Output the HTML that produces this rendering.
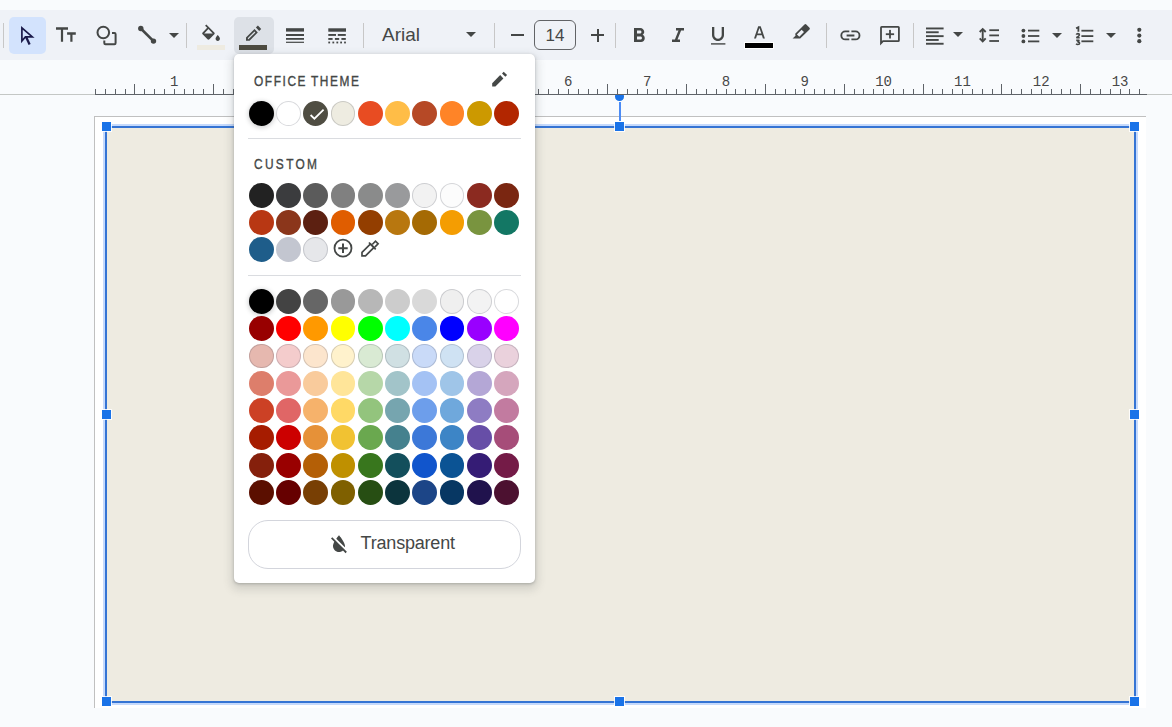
<!DOCTYPE html>
<html><head><meta charset="utf-8">
<style>
*{margin:0;padding:0;box-sizing:border-box}
html,body{width:1172px;height:727px;overflow:hidden;background:#f9fbfd;font-family:"Liberation Sans",sans-serif;position:relative}
.abs{position:absolute}
.tb{position:absolute;left:0;top:10px;width:1172px;height:50px;background:#eff2f7}
.sep{position:absolute;top:23px;width:1px;height:25px;background:#c7c7c7}
.tri{position:absolute;width:0;height:0;border-left:5px solid transparent;border-right:5px solid transparent;border-top:5px solid #444746}
svg{position:absolute;overflow:visible}
.sw{position:absolute;width:24.8px;height:24.8px;border-radius:50%}
.bd{box-shadow:inset 0 0 0 1px rgba(60,64,80,.2)}
.lbl{position:absolute;font-size:14px;color:#444746;letter-spacing:1.85px;transform:scaleX(0.85);transform-origin:0 0;-webkit-text-stroke:0.35px #444746;white-space:nowrap}
.rn{position:absolute;top:73px;font-size:14px;line-height:16px;font-family:"Liberation Mono",monospace;color:#474747;width:30px;text-align:center}
.tick{position:absolute;width:1px;background:#5f6368}
.h{position:absolute;width:9px;height:9px;background:#1a73e8;box-shadow:0 0 0 1px rgba(255,255,255,.85)}
</style></head><body>

<div class="tb"></div>
<div class="sep" style="left:3px"></div>
<div class="sep" style="left:186px"></div>
<div class="sep" style="left:363px"></div>
<div class="sep" style="left:494px"></div>
<div class="sep" style="left:615px"></div>
<div class="sep" style="left:826px"></div>
<div class="sep" style="left:913px"></div>
<div class="abs" style="left:9px;top:17px;width:37px;height:37px;border-radius:5px;background:#d3e3fd"></div>
<svg style="left:14px;top:20px" width="30" height="30" viewBox="0 0 30 30"><path d="M7.9 7.9 V21 L11.4 16.9 H18.3 Z" fill="none" stroke="#1b1a4a" stroke-width="1.7" stroke-linejoin="miter" stroke-miterlimit="10"/><path d="M12 16.8 L15.6 24.4" stroke="#1b1a4a" stroke-width="2.3"/></svg>
<svg style="left:50px;top:20px" width="30" height="30" viewBox="0 0 30 30"><path d="M6 7.2 H18 V9.7 H13.1 V21.8 H10.9 V9.7 H6 Z M17.1 12.2 H25.8 V14.7 H22.5 V21.8 H20.3 V14.7 H17.1 Z" fill="#444746"/></svg>
<svg style="left:94px;top:24px" width="26" height="24" viewBox="0 0 26 24"><circle cx="9.3" cy="8.5" r="5.8" fill="none" stroke="#444746" stroke-width="2"/><path d="M18 9.1 H20.4 Q21.6 9.1 21.6 10.3 V19.1 Q21.6 20.3 20.4 20.3 H11.5 Q10.3 20.3 10.3 19.1 V16.6" fill="none" stroke="#444746" stroke-width="2"/></svg>
<svg style="left:136px;top:24px" width="22" height="22" viewBox="0 0 22 22"><path d="M4.8 4.5 L17.5 17.1" stroke="#444746" stroke-width="2.6"/><circle cx="4.8" cy="4.5" r="2.7" fill="#444746"/><circle cx="17.5" cy="17.1" r="2.7" fill="#444746"/></svg>
<div class="tri" style="left:169px;top:32.7px"></div>
<svg style="left:199px;top:24px" width="24" height="24" viewBox="0 0 24 24"><path transform="translate(0.52 0.47) scale(0.893)" d="M16.56 8.94L7.62 0 6.21 1.41l2.38 2.38-5.15 5.15c-.59.59-.59 1.54 0 2.12l5.5 5.5c.29.29.68.44 1.06.44s.77-.15 1.06-.44l5.5-5.5c.59-.58.59-1.530 0-2.12zM5.21 10L10 5.21 14.79 10H5.21z" fill="#444746"/><path transform="translate(-0.25 -0.6)" d="M19 11.5s-2.2 2.3-2.2 3.8c0 1.2 1 2.2 2.2 2.2s2.2-1 2.2-2.2c0-1.5-2.2-3.8-2.2-3.8z" fill="#444746"/></svg>
<div class="abs" style="left:197px;top:45px;width:28px;height:4.6px;background:#eeebe1"></div>
<div class="abs" style="left:234px;top:17px;width:40px;height:37px;border-radius:5px;background:#dde1e7"></div>
<svg style="left:238px;top:18px" width="30" height="30" viewBox="0 0 30 30"><path fill-rule="evenodd" d="M8 19.4 L16.5 11.1 L19.8 14.4 L11.6 22.7 H8 Z M16.5 13.5 L17.4 14.4 L10.4 21.3 L9.7 21.1 L10.2 19.7 Z" fill="#444746"/><path d="M17.9 9.6 L19.9 7.6 L23.2 10.9 L21.2 12.9 Z" fill="#444746"/></svg>
<div class="abs" style="left:239px;top:45px;width:28px;height:4.6px;background:#4d4b40"></div>
<svg style="left:286px;top:27px" width="18" height="17" viewBox="0 0 18 17"><rect x="0" y="1.2" width="18" height="3.4" fill="#444746"/><rect x="0" y="7" width="18" height="2" fill="#444746"/><rect x="0" y="11" width="18" height="1.8" fill="#444746"/><rect x="0" y="14.7" width="18" height="1.2" fill="#444746"/></svg>
<svg style="left:328px;top:27px" width="18" height="17" viewBox="0 0 18 17"><rect x="0.3" y="1.3" width="17.7" height="3.4" fill="#444746"/><rect x="0.3" y="7" width="7.7" height="1.9" fill="#444746"/><rect x="9.8" y="7" width="8" height="1.9" fill="#444746"/><rect x="0.3" y="11" width="4.3" height="1.9" fill="#444746"/><rect x="6.9" y="11" width="4.3" height="1.9" fill="#444746"/><rect x="13.4" y="11" width="4.4" height="1.9" fill="#444746"/><rect x="0.3" y="14.6" width="1.8" height="1.8" fill="#444746"/><rect x="4.4" y="14.6" width="1.8" height="1.8" fill="#444746"/><rect x="8.4" y="14.6" width="1.8" height="1.8" fill="#444746"/><rect x="12.2" y="14.6" width="1.8" height="1.8" fill="#444746"/><rect x="16.1" y="14.6" width="1.8" height="1.8" fill="#444746"/></svg>
<div class="abs" style="left:382px;top:23.3px;font-size:19px;color:#444746;line-height:24px">Arial</div>
<div class="tri" style="left:466px;top:31.5px"></div>
<div class="abs" style="left:511px;top:34px;width:13px;height:2px;background:#444746"></div>
<div class="abs" style="left:534px;top:20px;width:42px;height:30px;border:1px solid #616366;border-radius:6px"></div>
<div class="abs" style="left:534px;top:23.6px;width:42px;text-align:center;font-size:17px;line-height:24px;color:#444746">14</div>
<div class="abs" style="left:591px;top:34.3px;width:13px;height:2px;background:#444746"></div><div class="abs" style="left:596.5px;top:28.7px;width:2px;height:13px;background:#444746"></div>
<svg style="left:626.8px;top:24px" width="24" height="24" viewBox="0 0 24 24"><path d="M15.6 10.79c.97-.67 1.65-1.77 1.65-2.79 0-2.26-1.75-4-4-4H7v14h7.04c2.090 0 3.710-1.7 3.710-3.79 0-1.52-.86-2.82-2.150-3.42zM10 6.5h3c.83 0 1.5.67 1.5 1.5s-.67 1.5-1.5 1.5h-3v-3zm3.5 9H10v-3h3.5c.83 0 1.5.67 1.5 1.5s-.67 1.5-1.5 1.5z" fill="#444746"/></svg>
<svg style="left:666px;top:24px" width="24" height="24" viewBox="0 0 24 24"><path d="M10 4v2.6h2.5l-3.6 8.8H6V18h8v-2.6h-2.5l3.6-8.8H18V4z" fill="#444746"/></svg>
<svg style="left:706px;top:24.2px" width="24" height="24" viewBox="0 0 24 24"><path d="M12 17c3.310 0 6-2.69 6-6V3h-2.3v8c0 2.03-1.67 3.7-3.7 3.7S8.3 13.03 8.3 11V3H6v8c0 3.310 2.69 6 6 6z" fill="#444746"/><rect x="5" y="19.2" width="14.4" height="1.4" fill="#444746"/></svg>
<svg style="left:748px;top:20px" width="30" height="30" viewBox="0 0 30 30"><path fill-rule="evenodd" d="M6 18.4 L10.2 6.2 H12.7 L16.9 18.4 H14.9 L13.9 15.3 H9 L8 18.4 Z M9.55 13.5 H13.35 L11.45 7.9 Z" fill="#444746"/></svg>
<div class="abs" style="left:745px;top:43px;width:28px;height:5px;background:#000;box-shadow:0 0 0 1px #fff"></div>
<svg style="left:785px;top:18px" width="30" height="30" viewBox="0 0 30 30"><path fill-rule="evenodd" d="M10.2 15.8 L19.5 6.5 Q20.4 5.6 21.3 6.5 L24.5 9.7 Q25.4 10.6 24.5 11.5 L15.2 20.6 L7.6 20.6 L10.5 17.8 Z M11.9 16.4 L16.6 11.7 L19 14.1 L14.3 18.8 Z" fill="#444746"/></svg>
<svg style="left:839px;top:29px" width="23" height="13" viewBox="0 0 23 13"><path d="M10.3 2.4 H6.3 A4 4 0 0 0 6.3 10.4 H10.3 M12.4 2.4 H16.5 A4 4 0 0 1 16.5 10.4 H12.4 M7.6 6.5 H15.4" stroke="#444746" stroke-width="1.85" fill="none"/></svg>
<svg style="left:879px;top:25px" width="22" height="22" viewBox="0 0 22 22"><path fill-rule="evenodd" d="M1.1 2.6 Q1.1 1 2.7 1 H19.2 Q20.8 1 20.8 2.6 V15.5 Q20.8 17.1 19.2 17.1 H4.4 L1.1 20.4 Z M2.9 2.8 H19 V15.3 H3.7 L2.9 16.1 Z" fill="#444746"/><rect x="10.1" y="4.9" width="1.8" height="8.6" fill="#444746"/><rect x="6.8" y="8.3" width="8.3" height="1.8" fill="#444746"/></svg>
<svg style="left:926px;top:27px" width="18" height="18" viewBox="0 0 18 18"><rect x="0" y="0.5" width="17.6" height="1.9" fill="#444746"/><rect x="0" y="4.3" width="12.7" height="1.9" fill="#444746"/><rect x="0" y="8.2" width="17.6" height="1.9" fill="#444746"/><rect x="0" y="12" width="12.7" height="1.9" fill="#444746"/><rect x="0" y="15.8" width="17.6" height="1.9" fill="#444746"/></svg>
<div class="tri" style="left:953px;top:32.4px"></div>
<svg style="left:978px;top:27px" width="23" height="18" viewBox="0 0 23 18"><path d="M4.7 2.6 V13.8" stroke="#444746" stroke-width="1.9"/><path d="M1.7 5 L4.7 2 L7.7 5 M1.7 11.3 L4.7 14.3 L7.7 11.3" stroke="#444746" stroke-width="1.9" fill="none"/><rect x="11.3" y="2.3" width="9.7" height="1.8" fill="#444746"/><rect x="11.3" y="7.5" width="9.7" height="1.8" fill="#444746"/><rect x="11.3" y="13.1" width="9.7" height="1.8" fill="#444746"/></svg>
<svg style="left:1020px;top:27px" width="21" height="18" viewBox="0 0 21 18"><circle cx="3.4" cy="3.6" r="1.9" fill="#444746"/><circle cx="3.4" cy="9" r="1.9" fill="#444746"/><circle cx="3.4" cy="14.4" r="1.9" fill="#444746"/><rect x="8" y="2.7" width="11.3" height="1.8" fill="#444746"/><rect x="8" y="8.1" width="11.3" height="1.8" fill="#444746"/><rect x="8" y="13.5" width="11.3" height="1.8" fill="#444746"/></svg>
<div class="tri" style="left:1051.7px;top:32.5px"></div>
<svg style="left:1070px;top:22px" width="30" height="28" viewBox="0 0 30 28"><path d="M6.1 6.4 L8.4 5.3 V9.8" stroke="#444746" stroke-width="1.8" fill="none"/><path d="M6.3 12.7 Q6.8 11.6 7.9 11.6 Q9.4 11.6 9.4 12.9 Q9.4 13.9 6.4 15.8 H9.7" stroke="#444746" stroke-width="1.6" stroke-linejoin="bevel" fill="none"/><path d="M6.2 18.4 H9.3 L7.6 20 Q9.6 20 9.6 21.2 Q9.6 22.5 7.8 22.5 Q6.7 22.5 6.1 21.8" stroke="#444746" stroke-width="1.6" stroke-linejoin="bevel" fill="none"/><rect x="11.4" y="7.8" width="11.9" height="1.8" fill="#444746"/><rect x="11.4" y="13.2" width="11.9" height="1.8" fill="#444746"/><rect x="11.4" y="18.4" width="11.9" height="1.8" fill="#444746"/></svg>
<div class="tri" style="left:1105.8px;top:32.5px"></div>
<svg style="left:1134px;top:26px" width="10" height="20" viewBox="0 0 10 20"><circle cx="5.3" cy="3.8" r="2.1" fill="#444746"/><circle cx="5.3" cy="9.6" r="2.1" fill="#444746"/><circle cx="5.3" cy="15.2" r="2.1" fill="#444746"/></svg>
<div class="abs" style="left:0;top:94px;width:1172px;height:1px;background:#c4c7c5"></div>
<div class="abs" style="left:95px;top:94px;width:1052px;height:1px;background:#5f6368"></div>
<div class="tick" style="left:95px;top:89px;height:5px"></div>
<div class="tick" style="left:105px;top:89px;height:5px"></div>
<div class="tick" style="left:115px;top:89px;height:5px"></div>
<div class="tick" style="left:125px;top:89px;height:5px"></div>
<div class="tick" style="left:134px;top:84px;height:10px"></div>
<div class="tick" style="left:144px;top:89px;height:5px"></div>
<div class="tick" style="left:154px;top:89px;height:5px"></div>
<div class="tick" style="left:164px;top:89px;height:5px"></div>
<div class="tick" style="left:174px;top:89px;height:5px"></div>
<div class="tick" style="left:184px;top:89px;height:5px"></div>
<div class="tick" style="left:193px;top:89px;height:5px"></div>
<div class="tick" style="left:203px;top:89px;height:5px"></div>
<div class="tick" style="left:213px;top:84px;height:10px"></div>
<div class="tick" style="left:223px;top:89px;height:5px"></div>
<div class="tick" style="left:233px;top:89px;height:5px"></div>
<div class="tick" style="left:243px;top:89px;height:5px"></div>
<div class="tick" style="left:253px;top:89px;height:5px"></div>
<div class="tick" style="left:262px;top:89px;height:5px"></div>
<div class="tick" style="left:272px;top:89px;height:5px"></div>
<div class="tick" style="left:282px;top:89px;height:5px"></div>
<div class="tick" style="left:292px;top:84px;height:10px"></div>
<div class="tick" style="left:302px;top:89px;height:5px"></div>
<div class="tick" style="left:312px;top:89px;height:5px"></div>
<div class="tick" style="left:322px;top:89px;height:5px"></div>
<div class="tick" style="left:331px;top:89px;height:5px"></div>
<div class="tick" style="left:341px;top:89px;height:5px"></div>
<div class="tick" style="left:351px;top:89px;height:5px"></div>
<div class="tick" style="left:361px;top:89px;height:5px"></div>
<div class="tick" style="left:371px;top:84px;height:10px"></div>
<div class="tick" style="left:381px;top:89px;height:5px"></div>
<div class="tick" style="left:391px;top:89px;height:5px"></div>
<div class="tick" style="left:400px;top:89px;height:5px"></div>
<div class="tick" style="left:410px;top:89px;height:5px"></div>
<div class="tick" style="left:420px;top:89px;height:5px"></div>
<div class="tick" style="left:430px;top:89px;height:5px"></div>
<div class="tick" style="left:440px;top:89px;height:5px"></div>
<div class="tick" style="left:450px;top:84px;height:10px"></div>
<div class="tick" style="left:460px;top:89px;height:5px"></div>
<div class="tick" style="left:469px;top:89px;height:5px"></div>
<div class="tick" style="left:479px;top:89px;height:5px"></div>
<div class="tick" style="left:489px;top:89px;height:5px"></div>
<div class="tick" style="left:499px;top:89px;height:5px"></div>
<div class="tick" style="left:509px;top:89px;height:5px"></div>
<div class="tick" style="left:519px;top:89px;height:5px"></div>
<div class="tick" style="left:528px;top:84px;height:10px"></div>
<div class="tick" style="left:538px;top:89px;height:5px"></div>
<div class="tick" style="left:548px;top:89px;height:5px"></div>
<div class="tick" style="left:558px;top:89px;height:5px"></div>
<div class="tick" style="left:568px;top:89px;height:5px"></div>
<div class="tick" style="left:578px;top:89px;height:5px"></div>
<div class="tick" style="left:588px;top:89px;height:5px"></div>
<div class="tick" style="left:597px;top:89px;height:5px"></div>
<div class="tick" style="left:607px;top:84px;height:10px"></div>
<div class="tick" style="left:617px;top:89px;height:5px"></div>
<div class="tick" style="left:627px;top:89px;height:5px"></div>
<div class="tick" style="left:637px;top:89px;height:5px"></div>
<div class="tick" style="left:647px;top:89px;height:5px"></div>
<div class="tick" style="left:657px;top:89px;height:5px"></div>
<div class="tick" style="left:666px;top:89px;height:5px"></div>
<div class="tick" style="left:676px;top:89px;height:5px"></div>
<div class="tick" style="left:686px;top:84px;height:10px"></div>
<div class="tick" style="left:696px;top:89px;height:5px"></div>
<div class="tick" style="left:706px;top:89px;height:5px"></div>
<div class="tick" style="left:716px;top:89px;height:5px"></div>
<div class="tick" style="left:726px;top:89px;height:5px"></div>
<div class="tick" style="left:735px;top:89px;height:5px"></div>
<div class="tick" style="left:745px;top:89px;height:5px"></div>
<div class="tick" style="left:755px;top:89px;height:5px"></div>
<div class="tick" style="left:765px;top:84px;height:10px"></div>
<div class="tick" style="left:775px;top:89px;height:5px"></div>
<div class="tick" style="left:785px;top:89px;height:5px"></div>
<div class="tick" style="left:795px;top:89px;height:5px"></div>
<div class="tick" style="left:804px;top:89px;height:5px"></div>
<div class="tick" style="left:814px;top:89px;height:5px"></div>
<div class="tick" style="left:824px;top:89px;height:5px"></div>
<div class="tick" style="left:834px;top:89px;height:5px"></div>
<div class="tick" style="left:844px;top:84px;height:10px"></div>
<div class="tick" style="left:854px;top:89px;height:5px"></div>
<div class="tick" style="left:863px;top:89px;height:5px"></div>
<div class="tick" style="left:873px;top:89px;height:5px"></div>
<div class="tick" style="left:883px;top:89px;height:5px"></div>
<div class="tick" style="left:893px;top:89px;height:5px"></div>
<div class="tick" style="left:903px;top:89px;height:5px"></div>
<div class="tick" style="left:913px;top:89px;height:5px"></div>
<div class="tick" style="left:923px;top:84px;height:10px"></div>
<div class="tick" style="left:932px;top:89px;height:5px"></div>
<div class="tick" style="left:942px;top:89px;height:5px"></div>
<div class="tick" style="left:952px;top:89px;height:5px"></div>
<div class="tick" style="left:962px;top:89px;height:5px"></div>
<div class="tick" style="left:972px;top:89px;height:5px"></div>
<div class="tick" style="left:982px;top:89px;height:5px"></div>
<div class="tick" style="left:992px;top:89px;height:5px"></div>
<div class="tick" style="left:1001px;top:84px;height:10px"></div>
<div class="tick" style="left:1011px;top:89px;height:5px"></div>
<div class="tick" style="left:1021px;top:89px;height:5px"></div>
<div class="tick" style="left:1031px;top:89px;height:5px"></div>
<div class="tick" style="left:1041px;top:89px;height:5px"></div>
<div class="tick" style="left:1051px;top:89px;height:5px"></div>
<div class="tick" style="left:1061px;top:89px;height:5px"></div>
<div class="tick" style="left:1070px;top:89px;height:5px"></div>
<div class="tick" style="left:1080px;top:84px;height:10px"></div>
<div class="tick" style="left:1090px;top:89px;height:5px"></div>
<div class="tick" style="left:1100px;top:89px;height:5px"></div>
<div class="tick" style="left:1110px;top:89px;height:5px"></div>
<div class="tick" style="left:1120px;top:89px;height:5px"></div>
<div class="tick" style="left:1129px;top:89px;height:5px"></div>
<div class="tick" style="left:1139px;top:89px;height:5px"></div>
<div class="rn" style="left:159.19px;top:73.5px">1</div>
<div class="rn" style="left:238.01px;top:73.5px">2</div>
<div class="rn" style="left:316.83px;top:73.5px">3</div>
<div class="rn" style="left:395.65px;top:73.5px">4</div>
<div class="rn" style="left:474.47px;top:73.5px">5</div>
<div class="rn" style="left:553.29px;top:73.5px">6</div>
<div class="rn" style="left:632.12px;top:73.5px">7</div>
<div class="rn" style="left:710.94px;top:73.5px">8</div>
<div class="rn" style="left:789.76px;top:73.5px">9</div>
<div class="rn" style="left:868.58px;top:73.5px">10</div>
<div class="rn" style="left:947.40px;top:73.5px">11</div>
<div class="rn" style="left:1026.22px;top:73.5px">12</div>
<div class="rn" style="left:1105.04px;top:73.5px">13</div>
<div class="abs" style="left:94px;top:116px;width:1052px;height:592px;background:#fff;border-top:1px solid #c0c0c0;border-left:1px solid #c0c0c0"></div>
<div class="abs" style="left:106px;top:127px;width:1029px;height:575px;background:#eeebe1"></div>
<div class="abs" style="left:103px;top:123.5px;width:1035px;height:581px;border:2px solid #c6dafc"></div>
<div class="abs" style="left:105px;top:125.5px;width:1031px;height:577px;border:2px solid #3574d4"></div>
<div class="h" style="left:101.8px;top:122.2px"></div>
<div class="h" style="left:101.8px;top:410.0px"></div>
<div class="h" style="left:101.8px;top:697.1px"></div>
<div class="h" style="left:615.3px;top:122.2px"></div>
<div class="h" style="left:615.3px;top:697.1px"></div>
<div class="h" style="left:1130.3px;top:122.2px"></div>
<div class="h" style="left:1130.3px;top:410.0px"></div>
<div class="h" style="left:1130.3px;top:697.1px"></div>
<div class="abs" style="left:618.8px;top:102px;width:1.9px;height:19px;background:#4c8bf5"></div>
<div class="abs" style="left:615.4px;top:95px;width:8.7px;height:7px;overflow:hidden"><div style="position:absolute;left:0;top:-2.6px;width:8.7px;height:8.7px;border-radius:50%;background:#1a73e8"></div></div>
<div class="abs" style="left:234px;top:54px;width:301px;height:529px;background:#fff;border-radius:5px;box-shadow:0 4px 8px 3px rgba(60,64,67,.15),0 1px 3px rgba(60,64,67,.3)"></div>
<div class="lbl" style="left:254px;top:73px;line-height:16px;word-spacing:-1px">OFFICE THEME</div>
<svg style="left:491px;top:71px" width="17" height="17" viewBox="0 0 17 17"><path d="M1.2 15.6 V12.3 L9.2 4.1 L12.4 7.4 L4.4 15.6 Z" fill="#444746"/><path d="M11 2.5 L12.7 0.7 L16.1 4.1 L14.3 5.8 Z" fill="#444746"/></svg>
<div class="sw" style="left:249.00px;top:101.00px;background:#000000;box-shadow:0 1px 4px 1px rgba(60,64,67,.22)"></div>
<div class="sw bd" style="left:276.22px;top:101.00px;background:#ffffff;"></div>
<div class="sw" style="left:303.44px;top:101.00px;background:#4f4d42;"></div>
<div class="sw bd" style="left:330.66px;top:101.00px;background:#eeece1;"></div>
<div class="sw" style="left:357.88px;top:101.00px;background:#e84c22;"></div>
<div class="sw" style="left:385.10px;top:101.00px;background:#ffbd47;"></div>
<div class="sw" style="left:412.32px;top:101.00px;background:#b64926;"></div>
<div class="sw" style="left:439.54px;top:101.00px;background:#ff8427;"></div>
<div class="sw" style="left:466.76px;top:101.00px;background:#cc9900;"></div>
<div class="sw" style="left:493.98px;top:101.00px;background:#b22600;"></div>
<svg style="left:303.44px;top:101px" width="25" height="25" viewBox="0 0 25 25"><path d="M7.6 14 L11.4 17.7 L20.6 8.7" stroke="#fff" stroke-width="1.75" fill="none"/></svg>
<div class="abs" style="left:248px;top:138px;width:273px;height:1px;background:#dadce0"></div>
<div class="lbl" style="left:254px;top:156px;line-height:16px;letter-spacing:2.75px">CUSTOM</div>
<div class="sw" style="left:249.00px;top:182.90px;background:#222222;"></div>
<div class="sw" style="left:276.22px;top:182.90px;background:#3b3c3e;"></div>
<div class="sw" style="left:303.44px;top:182.90px;background:#5b5b5b;"></div>
<div class="sw" style="left:330.66px;top:182.90px;background:#808080;"></div>
<div class="sw" style="left:357.88px;top:182.90px;background:#8a8b8b;"></div>
<div class="sw" style="left:385.10px;top:182.90px;background:#999a9c;"></div>
<div class="sw bd" style="left:412.32px;top:182.90px;background:#f2f2f2;"></div>
<div class="sw bd" style="left:439.54px;top:182.90px;background:#fcfcfc;"></div>
<div class="sw" style="left:466.76px;top:182.90px;background:#8b2a20;"></div>
<div class="sw" style="left:493.98px;top:182.90px;background:#7a2611;"></div>
<div class="sw" style="left:249.00px;top:210.00px;background:#b83713;"></div>
<div class="sw" style="left:276.22px;top:210.00px;background:#8b361b;"></div>
<div class="sw" style="left:303.44px;top:210.00px;background:#5c2011;"></div>
<div class="sw" style="left:330.66px;top:210.00px;background:#e05d00;"></div>
<div class="sw" style="left:357.88px;top:210.00px;background:#933e00;"></div>
<div class="sw" style="left:385.10px;top:210.00px;background:#b8770f;"></div>
<div class="sw" style="left:412.32px;top:210.00px;background:#a56a04;"></div>
<div class="sw" style="left:439.54px;top:210.00px;background:#f49d02;"></div>
<div class="sw" style="left:466.76px;top:210.00px;background:#79943f;"></div>
<div class="sw" style="left:493.98px;top:210.00px;background:#137764;"></div>
<div class="sw" style="left:249.00px;top:237.00px;background:#1e5d8a;"></div>
<div class="sw" style="left:276.22px;top:237.00px;background:#c3c6d0;"></div>
<div class="sw bd" style="left:303.44px;top:237.00px;background:#e6e7ea;"></div>
<svg style="left:333px;top:238px" width="20" height="20" viewBox="0 0 20 20"><circle cx="10" cy="10.2" r="8.5" fill="none" stroke="#444746" stroke-width="1.8"/><path d="M10 5.5 V14.9 M5.3 10.2 H14.7" stroke="#444746" stroke-width="2"/></svg>
<svg style="left:356px;top:234px" width="28" height="28" viewBox="0 0 28 28"><path d="M6 21.6 V18.4 L14.5 9.9 L18 13.4 L9.5 21.9 H6 Z" fill="none" stroke="#444746" stroke-width="1.7" stroke-linejoin="miter"/><path d="M12.9 8.5 L19.7 15.3" stroke="#444746" stroke-width="1.7"/><path d="M16.2 10.5 L19.5 7.2 L22.1 9.8 L18.8 13.1" fill="none" stroke="#444746" stroke-width="1.7"/></svg>
<div class="abs" style="left:248px;top:275px;width:273px;height:1px;background:#dadce0"></div>
<div class="sw" style="left:249.00px;top:289.10px;background:#000000;box-shadow:0 1px 4px 1px rgba(60,64,67,.22)"></div>
<div class="sw" style="left:276.22px;top:289.10px;background:#434343;"></div>
<div class="sw" style="left:303.44px;top:289.10px;background:#666666;"></div>
<div class="sw" style="left:330.66px;top:289.10px;background:#999999;"></div>
<div class="sw" style="left:357.88px;top:289.10px;background:#b7b7b7;"></div>
<div class="sw" style="left:385.10px;top:289.10px;background:#cccccc;"></div>
<div class="sw" style="left:412.32px;top:289.10px;background:#d9d9d9;"></div>
<div class="sw bd" style="left:439.54px;top:289.10px;background:#efefef;"></div>
<div class="sw bd" style="left:466.76px;top:289.10px;background:#f3f3f3;"></div>
<div class="sw bd" style="left:493.98px;top:289.10px;background:#ffffff;"></div>
<div class="sw" style="left:249.00px;top:316.37px;background:#980000;"></div>
<div class="sw" style="left:276.22px;top:316.37px;background:#ff0000;"></div>
<div class="sw" style="left:303.44px;top:316.37px;background:#ff9900;"></div>
<div class="sw" style="left:330.66px;top:316.37px;background:#ffff00;"></div>
<div class="sw" style="left:357.88px;top:316.37px;background:#00ff00;"></div>
<div class="sw" style="left:385.10px;top:316.37px;background:#00ffff;"></div>
<div class="sw" style="left:412.32px;top:316.37px;background:#4a86e8;"></div>
<div class="sw" style="left:439.54px;top:316.37px;background:#0000ff;"></div>
<div class="sw" style="left:466.76px;top:316.37px;background:#9900ff;"></div>
<div class="sw" style="left:493.98px;top:316.37px;background:#ff00ff;"></div>
<div class="sw bd" style="left:249.00px;top:343.64px;background:#e6b8af;"></div>
<div class="sw bd" style="left:276.22px;top:343.64px;background:#f4cccc;"></div>
<div class="sw bd" style="left:303.44px;top:343.64px;background:#fce5cd;"></div>
<div class="sw bd" style="left:330.66px;top:343.64px;background:#fff2cc;"></div>
<div class="sw bd" style="left:357.88px;top:343.64px;background:#d9ead3;"></div>
<div class="sw bd" style="left:385.10px;top:343.64px;background:#d0e0e3;"></div>
<div class="sw bd" style="left:412.32px;top:343.64px;background:#c9daf8;"></div>
<div class="sw bd" style="left:439.54px;top:343.64px;background:#cfe2f3;"></div>
<div class="sw bd" style="left:466.76px;top:343.64px;background:#d9d2e9;"></div>
<div class="sw bd" style="left:493.98px;top:343.64px;background:#ead1dc;"></div>
<div class="sw" style="left:249.00px;top:370.91px;background:#dd7e6b;"></div>
<div class="sw" style="left:276.22px;top:370.91px;background:#ea9999;"></div>
<div class="sw" style="left:303.44px;top:370.91px;background:#f9cb9c;"></div>
<div class="sw" style="left:330.66px;top:370.91px;background:#ffe599;"></div>
<div class="sw" style="left:357.88px;top:370.91px;background:#b6d7a8;"></div>
<div class="sw" style="left:385.10px;top:370.91px;background:#a2c4c9;"></div>
<div class="sw" style="left:412.32px;top:370.91px;background:#a4c2f4;"></div>
<div class="sw" style="left:439.54px;top:370.91px;background:#9fc5e8;"></div>
<div class="sw" style="left:466.76px;top:370.91px;background:#b4a7d6;"></div>
<div class="sw" style="left:493.98px;top:370.91px;background:#d5a6bd;"></div>
<div class="sw" style="left:249.00px;top:398.18px;background:#cc4125;"></div>
<div class="sw" style="left:276.22px;top:398.18px;background:#e06666;"></div>
<div class="sw" style="left:303.44px;top:398.18px;background:#f6b26b;"></div>
<div class="sw" style="left:330.66px;top:398.18px;background:#ffd966;"></div>
<div class="sw" style="left:357.88px;top:398.18px;background:#93c47d;"></div>
<div class="sw" style="left:385.10px;top:398.18px;background:#76a5af;"></div>
<div class="sw" style="left:412.32px;top:398.18px;background:#6d9eeb;"></div>
<div class="sw" style="left:439.54px;top:398.18px;background:#6fa8dc;"></div>
<div class="sw" style="left:466.76px;top:398.18px;background:#8e7cc3;"></div>
<div class="sw" style="left:493.98px;top:398.18px;background:#c27ba0;"></div>
<div class="sw" style="left:249.00px;top:425.45px;background:#a61c00;"></div>
<div class="sw" style="left:276.22px;top:425.45px;background:#cc0000;"></div>
<div class="sw" style="left:303.44px;top:425.45px;background:#e69138;"></div>
<div class="sw" style="left:330.66px;top:425.45px;background:#f1c232;"></div>
<div class="sw" style="left:357.88px;top:425.45px;background:#6aa84f;"></div>
<div class="sw" style="left:385.10px;top:425.45px;background:#45818e;"></div>
<div class="sw" style="left:412.32px;top:425.45px;background:#3c78d8;"></div>
<div class="sw" style="left:439.54px;top:425.45px;background:#3d85c6;"></div>
<div class="sw" style="left:466.76px;top:425.45px;background:#674ea7;"></div>
<div class="sw" style="left:493.98px;top:425.45px;background:#a64d79;"></div>
<div class="sw" style="left:249.00px;top:452.72px;background:#85200c;"></div>
<div class="sw" style="left:276.22px;top:452.72px;background:#990000;"></div>
<div class="sw" style="left:303.44px;top:452.72px;background:#b45f06;"></div>
<div class="sw" style="left:330.66px;top:452.72px;background:#bf9000;"></div>
<div class="sw" style="left:357.88px;top:452.72px;background:#38761d;"></div>
<div class="sw" style="left:385.10px;top:452.72px;background:#134f5c;"></div>
<div class="sw" style="left:412.32px;top:452.72px;background:#1155cc;"></div>
<div class="sw" style="left:439.54px;top:452.72px;background:#0b5394;"></div>
<div class="sw" style="left:466.76px;top:452.72px;background:#351c75;"></div>
<div class="sw" style="left:493.98px;top:452.72px;background:#741b47;"></div>
<div class="sw" style="left:249.00px;top:479.99px;background:#5b0f00;"></div>
<div class="sw" style="left:276.22px;top:479.99px;background:#660000;"></div>
<div class="sw" style="left:303.44px;top:479.99px;background:#783f04;"></div>
<div class="sw" style="left:330.66px;top:479.99px;background:#7f6000;"></div>
<div class="sw" style="left:357.88px;top:479.99px;background:#274e13;"></div>
<div class="sw" style="left:385.10px;top:479.99px;background:#0c343d;"></div>
<div class="sw" style="left:412.32px;top:479.99px;background:#1c4587;"></div>
<div class="sw" style="left:439.54px;top:479.99px;background:#073763;"></div>
<div class="sw" style="left:466.76px;top:479.99px;background:#20124d;"></div>
<div class="sw" style="left:493.98px;top:479.99px;background:#4c1130;"></div>
<div class="abs" style="left:248px;top:520px;width:273px;height:49px;border:1px solid #d3d5dc;border-radius:20px"></div>
<svg style="left:326.5px;top:532px" width="24" height="24" viewBox="0 0 24 24"><path d="M18 14c0-4-6-10.8-6-10.8s-1.33 1.51-2.73 3.52l8.59 8.59c.09-.42.14-.86.14-1.31zm-.88 3.12L12.5 12.5 5.27 5.27 4 6.55l3.32 3.32C6.55 11.32 6 12.79 6 14c0 3.310 2.69 6 6 6 1.52 0 2.9-.57 3.96-1.5l2.630 2.63 1.27-1.27-2.74-2.74z" fill="#444746"/></svg>
<div class="abs" style="left:360.6px;top:532px;font-size:18px;line-height:22px;letter-spacing:-0.2px;color:#444746">Transparent</div>
</body></html>
